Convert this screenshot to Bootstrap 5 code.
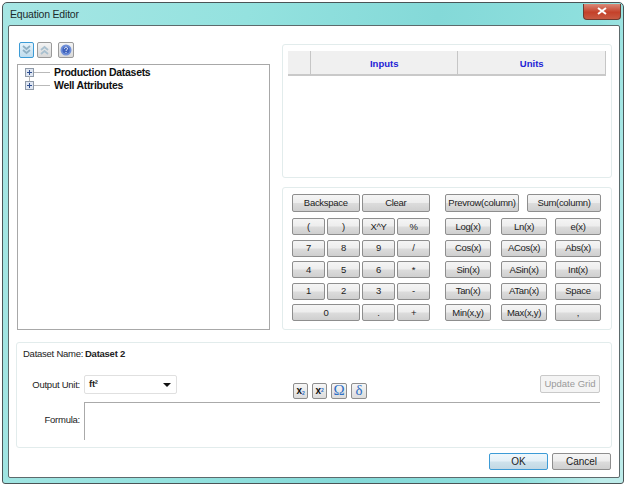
<!DOCTYPE html>
<html lang="en">
<head>
    <meta charset="UTF-8">
    <meta name="viewport" content="width=device-width, initial-scale=1.0">
    <title>Equation Editor</title>
    <link href="https://cdn.jsdelivr.net/npm/bootstrap@5.3.0/dist/css/bootstrap.min.css" rel="stylesheet">
    <style>
        html, body { height: 100%; background: #fff; }
        body { font-family: "Liberation Sans", Arial, sans-serif; font-size: 9.5px; letter-spacing: -.25px; color: #222; padding: 2px 4px 3px 2px; overflow: hidden; }
        .win-frame { height: 482px; border: 1px solid #4a5456; border-radius: 5px 5px 3px 3px; padding: 0 3px 6px 5px;
            background: linear-gradient(100deg, #a6e6e4 0%, #94e2df 35%, #84d9d8 62%, #8fe0de 85%, #bdecea 97%); }
        .win-title { height: 22px; font-size: 10.5px; letter-spacing: -.2px; color: #1c2b2c; padding-left: 2px; }
        .win-title-text { padding-top: 2px; }
        .win-close { width: 38px; height: 16px; margin-right: -1px; margin-top: -5px; border: 1px solid #6d3a30; border-top: 0; border-radius: 0 0 4px 4px;
            background: linear-gradient(#d98a78, #c4412a 55%, #c85a42); }
        .win-body { height: 453px; background: #fff; border: 1px solid #5d6a6c; border-radius: 2px; padding: 15px 7px 0 8px; }
        .top-area { gap: 12px; }
        .left-side { width: 253px; flex: none; }
        .right-side { width: 330px; flex: none; padding-top: 3px; }
        .tool-row { height: 18px; padding-left: 2px; margin-bottom: 5px; }
        .tool-btn { width: 15px; height: 16px; border: 1px solid #9a9a9a; border-radius: 2px; background: linear-gradient(#f4f4f4, #d8d8d8); padding: 0; }
        .tool-btn.is-on { border-color: #3c9bd6; background: linear-gradient(#e6f3fb, #bfdcee); }
        .tool-next { margin-left: 3px; }
        .tool-gap { margin-left: 6px; width: 16px; }
        .tree-box { height: 266px; border: 1px solid #a8a8a8; padding: 1px 0 0 7px; }
        .tree-line { height: 13px; font-size: 10.5px; letter-spacing: -.3px; font-weight: 700; color: #111; line-height: 13px; }
        .tree-plus { position: relative; width: 7px; height: 7px; border: 1px solid #8f9aa8; background: #dfe6f2; flex: none; box-sizing: content-box; }
        .tree-plus::after { content: ""; position: absolute; left: 1px; top: 3px; width: 5px; height: 1px; background: #2f4f8f; }
        .tree-plus::before { content: ""; position: absolute; left: 3px; top: 1px; width: 1px; height: 5px; background: #2f4f8f; }
        .tree-link { position: absolute; left: 3px; top: -6px; width: 1px; height: 5px; background: #b5b5b5; }
        .tree-dash { width: 16px; border-top: 1px solid #b9b9b9; margin-right: 4px; flex: none; }
        .soft-panel { border: 1px solid #e2ecec; border-radius: 3px; background: #fff; }
        .inputs-panel { height: 134px; padding: 6px 5px 0 5px; margin-bottom: 9px; }
        .head-row { height: 25px; }
        .head-cell { background: #f0f0f0; border-right: 1px solid #c6c6c6; border-bottom: 2px solid #c9c9c9; color: #2323d6; font-weight: 700; font-size: 9.5px; letter-spacing: 0; padding-top: 3px; }
        .cell-a { width: 23px; }
        .cell-b { width: 148px; }
        .cell-c { width: 148px; }
        .calc-panel { height: 143px; padding: 6px 10px 0 9px; }
        .calc-left { width: 138px; gap: 6px; flex: none; }
        .calc-right { width: 156px; margin-left: 15px; gap: 6px; flex: none; }
        .key-grid { display: grid; grid-template-columns: 33px 33px 33px 33px; grid-auto-rows: 17px; column-gap: 2px; row-gap: 4.5px; }
        .fn-grid { display: grid; grid-template-columns: 56px 54px 46px; grid-auto-rows: 17px; row-gap: 4.5px; }
        .fn-grid .key { width: 46px; }
        .top-keys { height: 18px; }
        .key { font-size: 9.5px; letter-spacing: -.3px; line-height: 1; padding: 0; color: #222; border: 1px solid #8e8e8e; border-radius: 2px; background: linear-gradient(#f5f5f5 0%, #ededed 48%, #dcdcdc 52%, #cfcfcf 100%); white-space: nowrap; }
        .key-wide { grid-column: span 2; }
        .w-back { width: 68px; margin-right: 2px; }
        .w-clear { width: 69px; }
        .w-col { width: 74px; }
        .w-col + .w-col { margin-left: 8px; }
        .bottom-panel { height: 106px; margin: 12px 0 0 -1px; width: 596px; padding: 4px 11px 0 6px; }
        .form-row1 { height: 14px; margin-bottom: 14px; }
        .lbl { width: 61px; text-align: right; padding-right: 4px; flex: none; white-space: nowrap; }
        .lbl-name { font-weight: 700; margin-left: 1px; }
        .form-row2 { height: 27px; }
        .lbl-unit { padding-top: 3px; }
        .unit-select { width: 93px; height: 19px; border: 1px solid #e0e0e0; border-radius: 2px; padding: 0 5px 0 4px; font-weight: 700; margin-right: 116px; flex: none; }
        .unit-caret { border-left: 4px solid transparent; border-right: 4px solid transparent; border-top: 4px solid #111; }
        .fmt-btn { width: 15px; height: 16px; padding: 0; margin: 8px 4px 0 0; border: 1px solid #8e8e8e; border-radius: 2px; background: linear-gradient(#f6f6f6, #dcdcdc); font-weight: 700; font-size: 10px; line-height: 13px; color: #111; text-align: center; flex: none; }
        .fmt-btn sub, .fmt-btn sup { font-size: 5px; color: #2f6fc4; }
        .fmt-wide { width: 16px; }
        .fmt-sym { color: #2f6fc4; font-family: "Liberation Serif", serif; font-weight: 400; font-size: 15px; letter-spacing: 0; }
        .fmt-last { margin-right: 0; }
        .update-btn { width: 60px; height: 18px; padding: 0; font-size: 9.5px; color: #9a9a9a; background: #f4f4f4; border: 1px solid #c9c9c9; border-radius: 2px; }
        .form-row3 { height: 38px; }
        .formula-box { flex: 1; border-top: 1px solid #aaa; border-left: 1px solid #aaa; }
        .lbl-formula { padding-top: 11px; }
        .foot-row { padding: 5px 1px 0 0; gap: 4px; }
        .foot-btn { width: 59px; height: 17px; padding: 0; font-size: 10px; color: #222; border: 1px solid #8e8e8e; border-radius: 2px; background: linear-gradient(#f5f5f5 0%, #ededed 48%, #dcdcdc 52%, #cfcfcf 100%); }
        .foot-btn.is-on { border-color: #3c9bd6; background: linear-gradient(#eef7fc 0%, #e4f0f7 48%, #cfe2ec 52%, #c2d8e4 100%); }
    </style>
</head>
<body>

    <div class="win-frame">
        <div class="win-title d-flex align-items-center justify-content-between">
            <span class="win-title-text">Equation Editor</span>
            <div class="win-close d-flex align-items-center justify-content-center">
                <svg width="10" height="8" viewBox="0 0 10 8"><path d="M1 1l8 6M9 1l-8 6" stroke="#fff" stroke-width="2"/></svg>
            </div>
        </div>

        <div class="win-body">
            <div class="top-area d-flex">
                <!-- tree side -->
                <div class="left-side">
                    <div class="tool-row d-flex align-items-center">
                        <button type="button" class="tool-btn is-on d-flex align-items-center justify-content-center">
                            <svg width="9" height="10" viewBox="0 0 9 10"><path d="M1 1l3.500 3 3.500-3M1 5l3.500 3 3.500-3" fill="none" stroke="#8fb0c4" stroke-width="1.800"/></svg>
                        </button>
                        <button type="button" class="tool-btn tool-next d-flex align-items-center justify-content-center">
                            <svg width="9" height="10" viewBox="0 0 9 10"><path d="M1 5l3.500-3 3.500 3M1 9l3.500-3 3.500 3" fill="none" stroke="#a9c0cf" stroke-width="1.800"/></svg>
                        </button>
                        <button type="button" class="tool-btn tool-gap d-flex align-items-center justify-content-center">
                            <svg width="12" height="12" viewBox="0 0 12 12"><circle cx="6" cy="6" r="5.500" fill="#6f8fd8"/><circle cx="6" cy="6" r="3.600" fill="#3f63bd"/><path d="M4.500 4.600a1.500 1.400 0 1 1 2.300 1.200c-.5.300-.8.500-.8 1.100" fill="none" stroke="#fff" stroke-width="1"/><circle cx="6" cy="8.500" r=".6" fill="#fff"/></svg>
                        </button>
                    </div>
                    <div class="tree-box">
                        <div class="tree-line d-flex align-items-center"><span class="tree-plus"></span><span class="tree-dash"></span>Production Datasets</div>
                        <div class="tree-line d-flex align-items-center"><span class="tree-plus"><span class="tree-link"></span></span><span class="tree-dash"></span>Well Attributes</div>
                    </div>
                </div>

                <!-- inputs and calculator -->
                <div class="right-side">
                    <div class="soft-panel inputs-panel">
                        <div class="head-row d-flex">
                            <div class="head-cell cell-a"></div>
                            <div class="head-cell cell-b d-flex align-items-center justify-content-center">Inputs</div>
                            <div class="head-cell cell-c d-flex align-items-center justify-content-center">Units</div>
                        </div>
                    </div>
                    <div class="soft-panel calc-panel d-flex">
                        <div class="calc-left d-flex flex-column">
                            <div class="top-keys d-flex">
                                <button type="button" class="key w-back">Backspace</button>
                                <button type="button" class="key w-clear">Clear</button>
                            </div>
                            <div class="key-grid" id="keyGrid"></div>
                        </div>
                        <div class="calc-right d-flex flex-column">
                            <div class="top-keys d-flex">
                                <button type="button" class="key w-col">Prevrow(column)</button>
                                <button type="button" class="key w-col">Sum(column)</button>
                            </div>
                            <div class="fn-grid" id="fnGrid"></div>
                        </div>
                    </div>
                </div>
            </div>

            <!-- dataset form -->
            <div class="soft-panel bottom-panel">
                <div class="form-row1 d-flex align-items-center">
                    <span class="lbl">Dataset Name:</span>
                    <span class="lbl-name">Dataset 2</span>
                </div>
                <div class="form-row2 d-flex align-items-start">
                    <span class="lbl lbl-unit">Output Unit:</span>
                    <div class="unit-select d-flex align-items-center justify-content-between">
                        <span>ft²</span><span class="unit-caret"></span>
                    </div>
                    <div class="fmt-btn">x<sub>2</sub></div>
                    <div class="fmt-btn">x<sup>2</sup></div>
                    <div class="fmt-btn fmt-sym fmt-wide">Ω</div>
                    <div class="fmt-btn fmt-sym fmt-wide fmt-last">δ</div>
                    <button type="button" class="update-btn ms-auto">Update Grid</button>
                </div>
                <div class="form-row3 d-flex">
                    <span class="lbl lbl-formula">Formula:</span>
                    <div class="formula-box"></div>
                </div>
            </div>

            <div class="foot-row d-flex justify-content-end">
                <button type="button" class="foot-btn is-on">OK</button>
                <button type="button" class="foot-btn">Cancel</button>
            </div>
        </div>
    </div>

    <script src="https://cdn.jsdelivr.net/npm/bootstrap@5.3.0/dist/js/bootstrap.bundle.min.js"></script>
    <script>
        // Calculator keys
        const keys = ['(', ')', 'X^Y', '%', '7', '8', '9', '/', '4', '5', '6', '*', '1', '2', '3', '-', '0', '.', '+'];
        const fns = ['Log(x)', 'Ln(x)', 'e(x)', 'Cos(x)', 'ACos(x)', 'Abs(x)', 'Sin(x)', 'ASin(x)', 'Int(x)',
            'Tan(x)', 'ATan(x)', 'Space', 'Min(x,y)', 'Max(x,y)', ','];

        function addKeys(gridId, labels) {
            const grid = document.getElementById(gridId);
            labels.forEach(label => {
                const btn = document.createElement('button');
                btn.type = 'button';
                btn.className = label === '0' ? 'key key-wide' : 'key';
                btn.textContent = label;
                grid.appendChild(btn);
            });
        }

        addKeys('keyGrid', keys);
        addKeys('fnGrid', fns);
    </script>

</body>
</html>
